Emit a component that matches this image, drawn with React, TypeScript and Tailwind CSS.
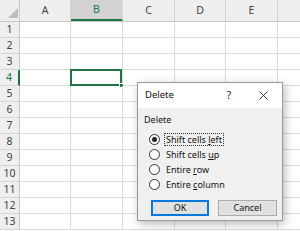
import React from "react";

const cols = [
  { name: "A", w: 51 },
  { name: "B", w: 52 },
  { name: "C", w: 52 },
  { name: "D", w: 51 },
  { name: "E", w: 52 },
  { name: "", w: 40 },
];

const rows = Array.from({ length: 13 }, (_, i) => i + 1);

function Radio({ checked, label, u, focus }: { checked?: boolean; label: string; u: number; focus?: boolean }) {
  const before = label.slice(0, u);
  const ch = label.slice(u, u + 1);
  const after = label.slice(u + 1);
  return (
    <div className="flex items-center h-[15px]">
      <div className="w-[11px] h-[11px] rounded-full border border-[#333] bg-white flex items-center justify-center shrink-0">
        {checked && <div className="w-[5px] h-[5px] rounded-full bg-[#222]" />}
      </div>
      <div className={"ml-[5px] px-[1px] leading-[11px] text-[9px] text-[#111] " + (focus ? "outline outline-1 outline-dotted outline-[#333]" : "")}>
        {before}
        <span className="underline underline-offset-1">{ch}</span>
        {after}
      </div>
    </div>
  );
}

export default function App() {
  return (
    <div className="relative w-[300px] h-[231px] overflow-hidden bg-white" style={{ fontFamily: '"Noto Sans", "Open Sans", sans-serif' }}>
      {/* header row */}
      <div className="flex h-[22px] bg-[#efefef] border-b border-[#c8c8c8]">
        <div className="relative w-[20px] shrink-0 border-r border-[#c8c8c8]">
          <svg className="absolute left-0 top-0" width="20" height="21">
            <polygon points="18,8 18,18 8,18" fill="#bdbdbd" />
          </svg>
        </div>
        {cols.map((c, i) => (
          <div
            key={i}
            className={
              "shrink-0 flex items-center justify-center text-[10.5px] border-r border-[#d6d6d6] " +
              (c.name === "B" ? "bg-[#d3d3d3] text-[#217346] border-b-2 border-b-[#217346]" : "text-[#444]")
            }
            style={{ width: c.w }}
          >
            {c.name}
          </div>
        ))}
      </div>
      {rows.map((r) => (
        <div key={r} className="flex h-[16px]">
          <div
            className={
              "w-[20px] shrink-0 flex items-center justify-center text-[10.5px] bg-[#efefef] border-b border-[#d6d6d6] " +
              (r === 4 ? "bg-[#d3d3d3] text-[#217346] border-r-2 border-r-[#217346]" : "text-[#444] border-r border-r-[#c8c8c8]")
            }
          >
            {r}
          </div>
          {cols.map((c, i) => (
            <div key={i} className="relative shrink-0 border-r border-b border-[#dadada]" style={{ width: c.w }}>
              {r === 4 && c.name === "B" && (
                <div className="absolute left-[-1px] top-[-1px] right-0 bottom-[-1px] border-2 border-[#217346]">
                  <div className="absolute right-[-4px] bottom-[-4px] w-[5px] h-[5px] bg-[#217346] border border-white" />
                </div>
              )}
            </div>
          ))}
        </div>
      ))}

      {/* dialog */}
      <div className="absolute left-[137px] top-[82px] w-[146px] h-[139px] flex flex-col border border-[#9a9a9a] bg-white shadow-[2px_3px_9px_rgba(0,0,0,0.28)]">
        <div className="h-[25px] flex items-center pl-[7px] pr-[14px] text-[9.5px] text-[#111] shrink-0">
          <span>Delete</span>
          <span className="ml-auto mr-[28px] text-[10px]">?</span>
          <svg width="9" height="9" viewBox="0 0 9 9">
            <path d="M0.5 0.5 L8.5 8.5 M8.5 0.5 L0.5 8.5" stroke="#222" strokeWidth="0.9" />
          </svg>
        </div>
        <div className="flex-1 bg-[#f0f0f0] flex flex-col pl-[6px] pr-[5px]">
          <div className="mt-[6px] h-[12px] leading-[12px] text-[9px] text-[#111]">Delete</div>
          <div className="mt-[6px] pl-[5px] flex flex-col">
            <Radio checked label="Shift cells left" u={12} focus />
            <Radio label="Shift cells up" u={12} />
            <Radio label="Entire row" u={7} />
            <Radio label="Entire column" u={7} />
          </div>
          <div className="mt-[8px] flex">
            <div className="ml-[7px] w-[58px] h-[16px] border-2 border-[#0078d7] bg-[#e1e1e1] flex items-center justify-center text-[9px] text-[#111]">
              OK
            </div>
            <div className="ml-[9px] w-[59px] h-[16px] border border-[#adadad] bg-[#e1e1e1] flex items-center justify-center text-[9px] text-[#111]">
              Cancel
            </div>
          </div>
        </div>
      </div>
    </div>
  );
}
